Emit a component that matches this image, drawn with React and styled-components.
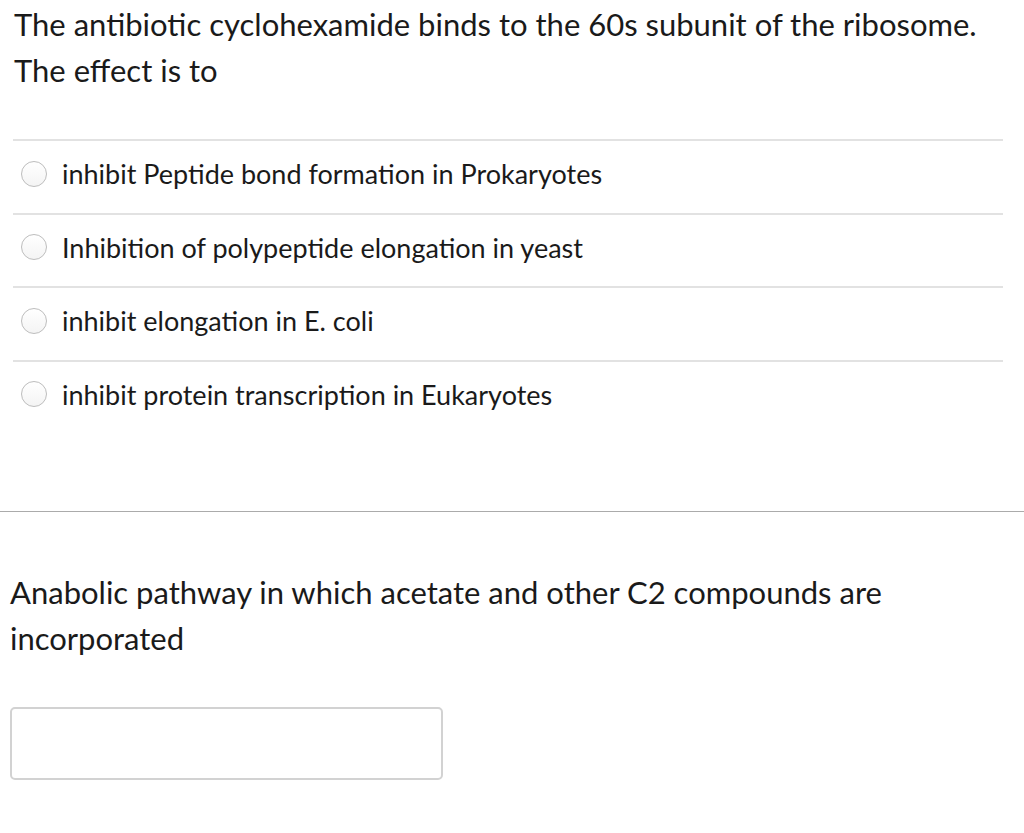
import React from "react";
import styled, { createGlobalStyle } from "styled-components";

const Global = createGlobalStyle`
  html, body { margin: 0; padding: 0; background: #fff; }
  body { font-family: Lato, "Noto Sans", sans-serif; color: #1a1a1a; }
`;

const Page = styled.div`
  width: 1024px;
  display: flex;
  flex-direction: column;
`;

const Question = styled.section`
  display: flex;
  flex-direction: column;
  padding: ${(p) => p.$pad};
`;

const Prompt = styled.p`
  margin: 0;
  font-size: 31px;
  line-height: 46px;
  padding-left: ${(p) => p.$indent || 0}px;
`;

const Answers = styled.div`
  margin: ${(p) => p.$m};
  width: 990px;
  display: flex;
  flex-direction: column;
`;

const AnswerRow = styled.label`
  display: flex;
  align-items: center;
  height: 73.5px;
  border-top: 2px solid #e2e2e2;
  box-sizing: border-box;
  padding: 0 0 6px 8px;
  gap: 15px;
`;

const Radio = styled.span`
  width: 26px;
  height: 26px;
  border-radius: 50%;
  border: 1px solid #bdbdbd;
  box-sizing: border-box;
  background: linear-gradient(#fff, #f4f4f4);
  flex: none;
`;

const AnswerText = styled.span`
  font-size: 27px;
`;

const Divider = styled.hr`
  margin: 0;
  border: none;
  border-top: 1px solid #ababab;
  width: 100%;
`;

const TextBox = styled.div`
  width: 433px;
  height: 73px;
  box-sizing: border-box;
  border: 2px solid #d2d2d2;
  border-radius: 5px;
  margin: 46px 0 0 10px;
`;

const options = [
  "inhibit Peptide bond formation in Prokaryotes",
  "Inhibition of polypeptide elongation in yeast",
  "inhibit elongation in E. coli",
  "inhibit protein transcription in Eukaryotes",
];

export default function App() {
  return (
    <Page>
      <Global />
      <Question $pad="1px 0 0 0">
        <Prompt $indent={14}>
          The antibiotic cyclohexamide binds to the 60s subunit of the ribosome.
          <br />
          The effect is to
        </Prompt>
        <Answers $m="46px 0 78px 13px">
          {options.map((o) => (
            <AnswerRow key={o}>
              <Radio />
              <AnswerText>{o}</AnswerText>
            </AnswerRow>
          ))}
        </Answers>
      </Question>
      <Divider />
      <Question $pad="57px 0 0 0">
        <Prompt $indent={10}>
          Anabolic pathway in which acetate and other C2 compounds are
          <br />
          incorporated
        </Prompt>
        <TextBox />
      </Question>
    </Page>
  );
}
